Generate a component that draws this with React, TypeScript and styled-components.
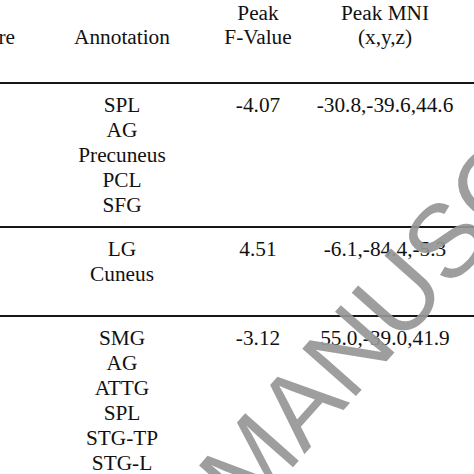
import React from 'react';
import styled, { createGlobalStyle } from 'styled-components';

const GlobalStyle = createGlobalStyle`
  html, body {
    margin: 0;
    padding: 0;
    background: #fff;
    overflow: hidden;
  }
`;

const Page = styled.div`
  position: relative;
  width: 474px;
  height: 474px;
  overflow: hidden;
  background: #fff;
  color: #111;
  font-family: 'Liberation Serif', 'Times New Roman', serif;
  font-size: 21.3px;
`;

const Row = styled.div<{ $height?: number; $header?: boolean }>`
  display: grid;
  grid-template-columns: 30px 184px 88px 166px;
  box-sizing: border-box;
  height: ${p => (p.$height ? `${p.$height}px` : 'auto')};
  align-items: ${p => (p.$header ? 'end' : 'start')};
  padding: ${p => (p.$header ? '1px 0 33px' : '9px 0 0')};
  border-top: ${p => (p.$header ? 'none' : '2px solid #161616')};
  line-height: ${p => (p.$header ? '24px' : '25px')};
`;

const Cell = styled.div`
  display: flex;
  flex-direction: column;
  align-items: center;
  text-align: center;
  white-space: nowrap;
`;

const LeadCell = styled.div`
  display: flex;
  justify-content: flex-end;
  padding-right: 15px;
  white-space: nowrap;
`;

const Watermark = styled.div`
  position: absolute;
  left: 104px;
  top: 186px;
  font-family: 'Liberation Sans', Arial, sans-serif;
  font-size: 104px;
  line-height: 1;
  white-space: nowrap;
  color: rgba(150, 150, 150, 0.92);
  transform: rotate(-48.5deg);
  transform-origin: center;
  pointer-events: none;
`;

interface Group {
  annotations: string[];
  f: string;
  mni: string;
  height?: number;
}

const groups: Group[] = [
  {
    annotations: ['SPL', 'AG', 'Precuneus', 'PCL', 'SFG'],
    f: '-4.07',
    mni: '-30.8,-39.6,44.6',
    height: 144,
  },
  {
    annotations: ['LG', 'Cuneus'],
    f: '4.51',
    mni: '-6.1,-84.4,-5.3',
    height: 89,
  },
  {
    annotations: ['SMG', 'AG', 'ATTG', 'SPL', 'STG-TP', 'STG-L'],
    f: '-3.12',
    mni: '55.0,-39.0,41.9',
  },
];

const App = () => (
  <Page>
    <GlobalStyle />
    <Row $header $height={82}>
      <LeadCell>Structure</LeadCell>
      <Cell>Annotation</Cell>
      <Cell>
        <span>Peak</span>
        <span>F-Value</span>
      </Cell>
      <Cell>
        <span>Peak MNI</span>
        <span>(x,y,z)</span>
      </Cell>
    </Row>
    {groups.map(g => (
      <Row key={g.mni} $height={g.height}>
        <LeadCell />
        <Cell>
          {g.annotations.map((a, i) => (
            <span key={i}>{a}</span>
          ))}
        </Cell>
        <Cell>{g.f}</Cell>
        <Cell>{g.mni}</Cell>
      </Row>
    ))}
    <Watermark>MANUSCRIPT</Watermark>
  </Page>
);

export default App;
